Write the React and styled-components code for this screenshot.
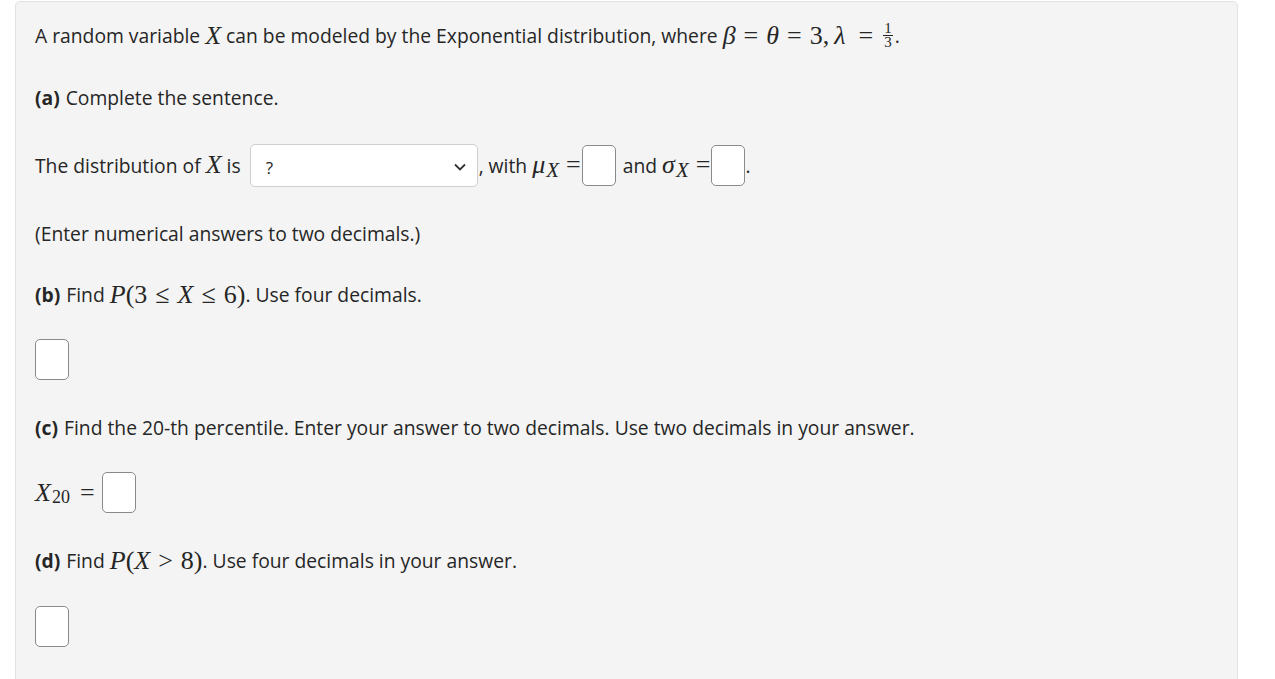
import React from "react";
import styled, { createGlobalStyle } from "styled-components";

const Global = createGlobalStyle`
  html, body { margin: 0; padding: 0; background: #fff; }
  body { font-family: "Open Sans", "Noto Sans", sans-serif; color: #262626; }
`;

const Panel = styled.div`
  margin: 1px 0 0 15px;
  width: 1223px;
  min-height: 700px;
  box-sizing: border-box;
  background: #f4f4f4;
  border: 1px solid #e2e2e2;
  border-radius: 5px;
  padding: 20px 20px 0 19px;
  font-size: 19.3px;
`;

const Line = styled.div`
  display: flex;
  align-items: center;
  height: ${(p) => p.h || 27}px;
  margin-top: ${(p) => p.mt || 0}px;
  white-space: nowrap;
`;

const Bold = styled.b`
  font-weight: 700;
  margin-right: 6px;
`;

const M = styled.span`
  font-family: "Liberation Serif", "DejaVu Serif", serif;
  font-style: ${(p) => (p.up ? "normal" : "italic")};
  font-size: 26px;
  margin: 0 ${(p) => p.mr ?? p.mx ?? 0}px 0 ${(p) => p.ml ?? p.mx ?? 0}px;
`;

const Sub = styled.span`
  font-family: "Liberation Serif", "DejaVu Serif", serif;
  font-style: ${(p) => (p.up ? "normal" : "italic")};
  font-size: ${(p) => (p.up ? 18 : 21)}px;
  position: relative;
  top: 5px;
  margin-left: 1px;
`;

const Frac = styled.span`
  display: inline-flex;
  flex-direction: column;
  align-items: center;
  font-family: "Liberation Serif", serif;
  font-size: 15px;
  line-height: 12px;
  margin: 0 2px 0 6px;
  position: relative;
  top: -1px;
  span:first-child {
    border-bottom: 1px solid #222;
    padding: 0 1px 1px;
  }
`;

const Select = styled.div`
  width: 228px;
  height: 43px;
  box-sizing: border-box;
  background: #fff;
  border: 1px solid #cfcfcf;
  border-radius: 5px;
  margin: 0 1px 0 9px;
  display: flex;
  align-items: center;
  justify-content: space-between;
  padding: 4px 10px 0 15px;
  font-size: 17px;
`;

const Box = styled.div`
  width: 34px;
  height: 41px;
  box-sizing: border-box;
  background: #fff;
  border: 1px solid #8a8a8a;
  border-radius: 5px;
  margin: 0 ${(p) => p.mr || 0}px 0 ${(p) => p.ml || 0}px;
  flex: none;
`;

const Chevron = () => (
  <svg width="14" height="10" viewBox="0 0 14 10">
    <path d="M2 2.5 L7 7.5 L12 2.5" fill="none" stroke="#333" strokeWidth="1.8" />
  </svg>
);

export default function App() {
  return (
    <>
      <Global />
      <Panel>
        <Line>
          A random variable&nbsp;<M>X</M>&nbsp;can be modeled by the Exponential distribution, where&nbsp;
          <M>β</M>
          <M up mx={8}>=</M>
          <M>θ</M>
          <M up mx={8}>=</M>
          <M up>3,</M>
          <M mx={5}>λ</M>
          <M up ml={8} mr={4}>=</M>
          <Frac>
            <span>1</span>
            <span>3</span>
          </Frac>
          .
        </Line>
        <Line mt={35}>
          <Bold>(a)</Bold>Complete the sentence.
        </Line>
        <Line mt={32} h={44}>
          The distribution of&nbsp;<M>X</M>&nbsp;is
          <Select>
            <span>?</span>
            <Chevron />
          </Select>
          , with&nbsp;<M>μ</M>
          <Sub>X</Sub>
          <M up ml={7} mr={1}>=</M>
          <Box mr={7} />
          and&nbsp;<M>σ</M>
          <Sub>X</Sub>
          <M up ml={7} mr={1}>=</M>
          <Box />.
        </Line>
        <Line mt={33}>(Enter numerical answers to two decimals.)</Line>
        <Line mt={34}>
          <Bold>(b)</Bold>Find&nbsp;<M>P</M>
          <M up>(3</M>
          <M up mx={8}>≤</M>
          <M>X</M>
          <M up mx={8}>≤</M>
          <M up>6)</M>. Use four decimals.
        </Line>
        <Line mt={31} h={41}>
          <Box />
        </Line>
        <Line mt={34}>
          <Bold>(c)</Bold>Find the 20-th percentile. Enter your answer to two decimals. Use two decimals in your answer.
        </Line>
        <Line mt={31} h={41}>
          <M>X</M>
          <Sub up>20</Sub>
          <M up ml={10} mr={7}>=</M>
          <Box />
        </Line>
        <Line mt={34}>
          <Bold>(d)</Bold>Find&nbsp;<M>P</M>
          <M up>(</M>
          <M>X</M>
          <M up mx={8}>&gt;</M>
          <M up>8)</M>. Use four decimals in your answer.
        </Line>
        <Line mt={32} h={41}>
          <Box />
        </Line>
      </Panel>
    </>
  );
}
